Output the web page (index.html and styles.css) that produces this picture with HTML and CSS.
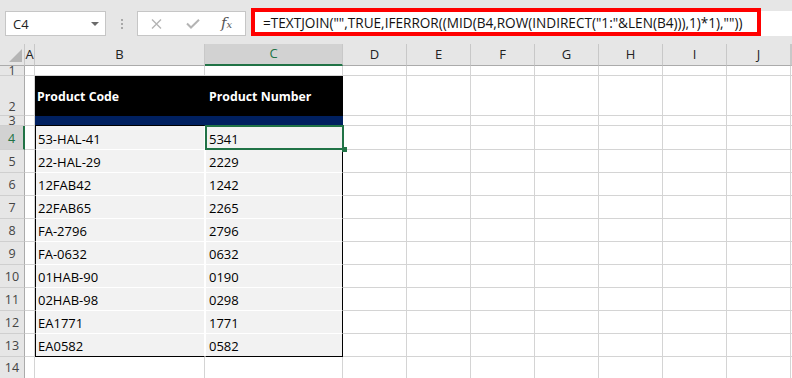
FILE: index.html
```html
<!DOCTYPE html>
<html lang="en">
  <head>
    <meta charset="UTF-8" />
    <meta name="viewport" content="width=device-width, initial-scale=1.0" />
    <title>TEXTJOIN - Product Numbers</title>
    <link rel="stylesheet" href="styles.css">
  </head>
  <body>
    <div class="toolbar">
      <div class="name-box"><span>C4</span><span class="caret"></span></div>
      <div class="grip"><i></i><i></i><i></i></div>
      <div class="fx-buttons">
        <svg class="btn-x" width="11" height="10" viewBox="0 0 11 10">
          <path d="M1 0.5 L10 9.5 M10 0.5 L1 9.5" stroke="#b4b4b4" stroke-width="1.4" fill="none" />
        </svg>
        <svg class="btn-ok" width="14" height="10" viewBox="0 0 14 10">
          <path d="M1 4.5 L5 8.5 L13 0.8" stroke="#b4b4b4" stroke-width="2" fill="none" />
        </svg>
        <span class="fx">f<small>x</small></span>
      </div>
      <div class="formula-bar">
        <div class="formula">=TEXTJOIN("",TRUE,IFERROR((MID(B4,ROW(INDIRECT("1:"&amp;LEN(B4))),1)*1),""))</div>
      </div>
    </div>

    <div class="sheet">
      <div class="row head">
        <div class="corner">
          <svg width="13" height="14" viewBox="0 0 13 14"><polygon points="13,0 13,13 0,13" fill="#b5b5b5" /></svg>
        </div>
        <div>A</div><div>B</div><div class="sel">C</div><div>D</div><div>E</div><div>F</div><div>G</div><div>H</div><div>I</div><div>J</div><div></div>
      </div>
      <div class="row thin">
        <div class="rh">1</div><div></div><div></div><div></div><div></div><div></div><div></div><div></div><div></div><div></div><div></div><div></div>
      </div>
      <div class="row tall">
        <div class="rh">2</div><div></div><div class="th">Product Code</div><div class="th th-c">Product Number</div><div></div><div></div><div></div><div></div><div></div><div></div><div></div><div></div>
      </div>
      <div class="row thin">
        <div class="rh">3</div><div></div><div class="band"></div><div class="band band-c"></div><div></div><div></div><div></div><div></div><div></div><div></div><div></div><div></div>
      </div>
      <div class="row first">
        <div class="rh sel">4</div><div></div><div class="tb">53-HAL-41</div><div class="tc active">5341</div><div></div><div></div><div></div><div></div><div></div><div></div><div></div><div></div>
      </div>
      <div class="row">
        <div class="rh">5</div><div></div><div class="tb">22-HAL-29</div><div class="tc">2229</div><div></div><div></div><div></div><div></div><div></div><div></div><div></div><div></div>
      </div>
      <div class="row">
        <div class="rh">6</div><div></div><div class="tb">12FAB42</div><div class="tc">1242</div><div></div><div></div><div></div><div></div><div></div><div></div><div></div><div></div>
      </div>
      <div class="row">
        <div class="rh">7</div><div></div><div class="tb">22FAB65</div><div class="tc">2265</div><div></div><div></div><div></div><div></div><div></div><div></div><div></div><div></div>
      </div>
      <div class="row">
        <div class="rh">8</div><div></div><div class="tb">FA-2796</div><div class="tc">2796</div><div></div><div></div><div></div><div></div><div></div><div></div><div></div><div></div>
      </div>
      <div class="row">
        <div class="rh">9</div><div></div><div class="tb">FA-0632</div><div class="tc">0632</div><div></div><div></div><div></div><div></div><div></div><div></div><div></div><div></div>
      </div>
      <div class="row">
        <div class="rh">10</div><div></div><div class="tb">01HAB-90</div><div class="tc">0190</div><div></div><div></div><div></div><div></div><div></div><div></div><div></div><div></div>
      </div>
      <div class="row">
        <div class="rh">11</div><div></div><div class="tb">02HAB-98</div><div class="tc">0298</div><div></div><div></div><div></div><div></div><div></div><div></div><div></div><div></div>
      </div>
      <div class="row">
        <div class="rh">12</div><div></div><div class="tb">EA1771</div><div class="tc">1771</div><div></div><div></div><div></div><div></div><div></div><div></div><div></div><div></div>
      </div>
      <div class="row last">
        <div class="rh">13</div><div></div><div class="tb">EA0582</div><div class="tc">0582</div><div></div><div></div><div></div><div></div><div></div><div></div><div></div><div></div>
      </div>
      <div class="row end">
        <div class="rh">14</div><div></div><div></div><div></div><div></div><div></div><div></div><div></div><div></div><div></div><div></div><div></div>
      </div>
    </div>
  </body>
</html>
```

FILE: styles.css
```css
:root {
  --xl-green: #217346;
  --grid: #d4d4d4;
  --chrome: #e6e6e6;
  --navy: #002060;
}

body {
  margin: 0;
  background-color: white;
  font-family: "Open Sans", sans-serif;
  overflow: hidden;
}

/* formula bar */
.toolbar {
  height: 44px;
  box-sizing: border-box;
  padding: 11px 0 0 5px;
  background-color: var(--chrome);
  display: flex;
  align-items: flex-start;
}

.name-box {
  width: 101px;
  height: 25px;
  box-sizing: border-box;
  background-color: white;
  border: 1px solid #c6c6c6;
  display: flex;
  align-items: center;
  justify-content: space-between;
  padding: 0 6px 0 7px;
  font-size: 13px;
  color: #222;
}

.caret {
  border-left: 4px solid transparent;
  border-right: 4px solid transparent;
  border-top: 4px solid #6a6a6a;
}

.grip {
  width: 31px;
  height: 25px;
  display: flex;
  flex-direction: column;
  align-items: center;
  justify-content: center;
  gap: 2px;
}

.grip i {
  width: 2px;
  height: 2px;
  background-color: #a8a8a8;
}

.fx-buttons {
  width: 109px;
  height: 25px;
  box-sizing: border-box;
  background-color: white;
  border: 1px solid #c6c6c6;
  display: flex;
  align-items: center;
  padding-left: 13px;
}

.btn-ok {
  margin-left: 24px;
}

.fx {
  margin-left: 21px;
  font-family: "DejaVu Serif", serif;
  font-style: italic;
  font-size: 15px;
  color: #555;
  line-height: 1;
}

.fx small {
  font-size: 10px;
}

.formula-bar {
  flex: 1;
  height: 25px;
  margin-left: 5px;
  background-color: white;
}

.formula {
  width: 510px;
  height: 28px;
  margin-top: -3px;
  box-sizing: border-box;
  border: 4px solid #ff0000;
  padding: 1px 0 0 8px;
  display: flex;
  align-items: center;
  font-size: 13.6px;
  color: #111;
  white-space: nowrap;
}

/* sheet grid */
.row {
  display: grid;
  grid-template-columns: 25px 10px 170px 138px repeat(7, 64px) 1fr;
  height: 23px;
}

.row > div {
  box-sizing: border-box;
  border-right: 1px solid var(--grid);
  border-bottom: 1px solid var(--grid);
  display: flex;
  align-items: flex-end;
  padding: 0 0 2px 3px;
  font-size: 13px;
  line-height: 16px;
  white-space: nowrap;
  overflow: hidden;
  color: #000;
}

.row.head {
  height: 22px;
}

.row.head > div {
  background-color: var(--chrome);
  border-right-color: #c8c8c8;
  border-bottom-color: #ababab;
  justify-content: center;
  align-items: center;
  padding: 0 0 2px 0;
  color: #222;
}

.row.head > .corner {
  justify-content: flex-end;
  align-items: flex-end;
  padding: 0 2px 2px 0;
}

.row.head > .sel {
  background-color: #d2d2d2;
  color: var(--xl-green);
  border-bottom: 2px solid var(--xl-green);
}

.row.thin {
  height: 10px;
}

.row.tall {
  height: 40px;
}

.row.first {
  height: 24px;
}

.row.end {
  height: 22px;
}

.row > .rh {
  background-color: var(--chrome);
  border-right-color: #ababab;
  border-bottom-color: #cfcfcf;
  justify-content: center;
  padding: 0 0 2px 0;
  font-size: 12.5px;
  color: #444;
}

.row.thin > .rh {
  align-items: flex-start;
  line-height: 10px;
}

.row.tall > .rh {
  padding-bottom: 0;
}

.row > .rh.sel {
  background-color: #d2d2d2;
  color: var(--xl-green);
  border-right: 2px solid var(--xl-green);
}

/* table */
.row > .th {
  background-color: black;
  border-color: black;
  color: white;
  font-size: 12.3px;
  font-weight: bold;
  align-items: center;
  padding: 2px 0 0 2px;
}

.row > .th-c {
  padding-left: 4px;
}

.row > .band {
  background-color: var(--navy);
  border-right-color: var(--navy);
  border-bottom-color: black;
}

.row > .tb,
.row > .tc {
  background-color: #f2f2f2;
  border-right-color: white;
  border-bottom-color: white;
}

.row > .tb {
  border-left: 1px solid black;
  padding-left: 2px;
}

.row > .tc {
  border-left: 1px solid white;
  border-right-color: black;
}

.row.last > .tb,
.row.last > .tc {
  border-bottom-color: black;
}

.row > .active {
  position: relative;
  overflow: visible;
  z-index: 1;
}

.active::after {
  content: "";
  position: absolute;
  top: -1px;
  left: -1px;
  right: -2px;
  bottom: -1px;
  border: 2px solid var(--xl-green);
}

.active::before {
  content: "";
  position: absolute;
  right: -5px;
  bottom: -3px;
  width: 5px;
  height: 5px;
  background-color: var(--xl-green);
  z-index: 2;
}
```
